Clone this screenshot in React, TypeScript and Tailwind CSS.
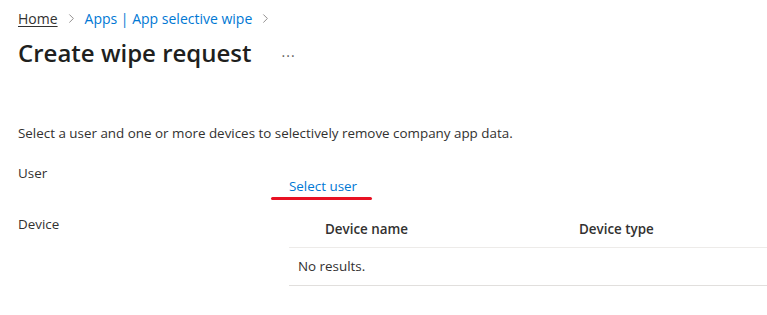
import { ChevronRight } from "lucide-react";

export default function App() {
  return (
    <div className="w-[767px] h-[315px] bg-white overflow-hidden text-[#323130] font-['Segoe_UI','Open_Sans',sans-serif]">
      <div className="pl-[18px] pt-[8px]">
        {/* breadcrumb */}
        <div className="flex items-center h-[20px] text-[14px]">
          <span className="underline underline-offset-2 text-[#323130]">Home</span>
          <ChevronRight className="w-[15px] h-[15px] mx-[6px] text-[#8a8886]" strokeWidth={1.5} />
          <span className="text-[#0078d4]">Apps | App selective wipe</span>
          <ChevronRight className="w-[15px] h-[15px] mx-[6px] text-[#8a8886]" strokeWidth={1.5} />
        </div>

        {/* title */}
        <div className="flex items-center mt-[9px] h-[32px]">
          <h1 className="text-[24px] font-semibold text-[#201f1e]">Create wipe request</h1>
          <span className="ml-[30px] text-[14px] text-[#605e5c] tracking-[1px] -mt-[4px]">...</span>
        </div>

        <p className="mt-[54px] text-[13.4px] leading-[20px]">
          Select a user and one or more devices to selectively remove company app data.
        </p>

        {/* user row */}
        <div className="flex mt-[20px]">
          <div className="w-[271px] text-[13.4px] leading-[20px]">User</div>
          <div className="pt-[12px] leading-[20px]">
            <span className="relative inline-block text-[13.4px] text-[#0078d4]">
              Select user
              <span className="absolute left-[-18px] right-[-15px] top-[21px] h-[3px] rounded-full bg-[#e81123]" />
            </span>
          </div>
        </div>

        {/* device row */}
        <div className="flex mt-[18px]">
          <div className="w-[271px] text-[13.4px] leading-[20px]">Device</div>
          <div className="flex-1 -mt-[2px]">
            <div className="flex h-[36px] items-center border-b border-[#edebe9] text-[13.4px] font-semibold">
              <div className="w-[290px] pl-[36px]">Device name</div>
              <div>Device type</div>
            </div>
            <div className="flex h-[38px] items-center border-b border-[#e1dfdd] text-[13.4px] pl-[9px]">
              No results.
            </div>
          </div>
        </div>
      </div>
    </div>
  );
}
